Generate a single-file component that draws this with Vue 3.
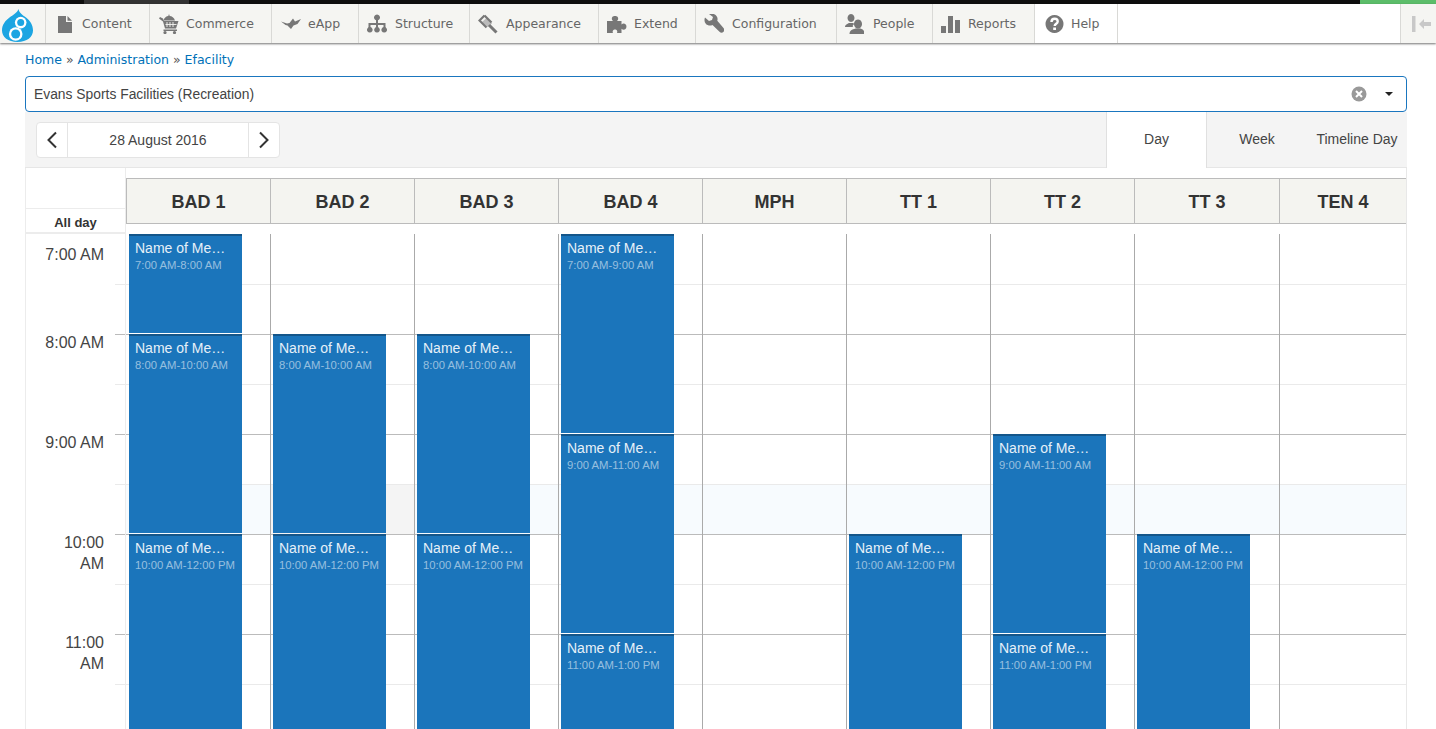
<script setup>
const nav = [
  { label: 'Content', width: 104, iconLeft: 12, textGap: 4, fill: ['M0 2h8v6h6v11H0z', 'M9.500 2L14 6.800H9.500z'] },
  { label: 'Commerce', width: 122, iconLeft: 9, textGap: 7, fill: ['M0 4.500l1-1.500 3 1.500 1 2.500h14.500l-2.500 7.500H6l-2-7-4-3z', 'M4.500 6.500c.8-3 3-4.300 4.800-4.500L10 0l.7 2c2.200.2 4.300 1.500 5.300 4.500z', 'M4.500 15.500h13.500V17H4.500z', 'M6 17a1.600 1.600 0 1 0 .01 0z', 'M15.500 17a1.600 1.600 0 1 0 .01 0z'], light: ['M8 8v5M11 8v5M14 8v5M6.500 10.500h11'] },
  { label: 'eApp', width: 87, iconLeft: 9, textGap: 7, fill: ['M0 7.500l6 2 2.500-.5L12 4.500l2 3 6-2.500-3.500 5-4 1.500-2.500 3.500-3.500-3.500-2-.5z'] },
  { label: 'Structure', width: 111, iconLeft: 8, textGap: 8, fill: ['M10 .5a3 3 0 1 0 .01 0z', 'M9 5h2v4h7.500v5h-2v-3H11v3H9v-3H3.500v3h-2V9H9z', 'M2.800 13a2.800 2.800 0 1 0 .01 0z', 'M10 13a2.800 2.800 0 1 0 .01 0z', 'M17.200 13a2.800 2.800 0 1 0 .01 0z'] },
  { label: 'Appearance', width: 129, iconLeft: 8, textGap: 8, light: ['M8.500 4L14 9.500 9.500 13 4 8z'], stroke: ['M6.500 1.500L1.500 6.500 8.500 13.500', 'M6.500 1.500L13.500 8.500'], thick: ['M11 11l7.500 7.500'] },
  { label: 'Extend', width: 97, iconLeft: 8, textGap: 7, fill: ['M0 7h6c-1.500-1-1.500-3-.5-4.200 1-1.200 4-1.200 5 0 1 1.200 1 3.200-.5 4.200h4.500v3.500c1.200-1.200 3-1.200 4-.2 1.300 1.200 1.300 3.500 0 4.700-1 1-2.800 1-4-.2V19h-4.500c1-2-.5-3.500-2-3.500s-3 1.500-2 3.500H0z'] },
  { label: 'Configuration', width: 141, iconLeft: 8, textGap: 8, fill: ['M1 3.500l4 3.500 3-1 1-3-4-3c3-1 6 0 7.500 2 1.200 1.700 1.300 3.200.8 4.700L19.500 14c1 1.300 1 2.600 0 3.800-1.100 1.300-2.800 1.200-4 0L8.500 11C6 12 3.500 11.500 2 10 .5 8.500 0 6 1 3.500z'] },
  { label: 'People', width: 96, iconLeft: 7, textGap: 9, fill: ['M7 0a3.500 4 0 1 0 .01 0z', 'M1 13c0-2.500 2.500-3 4-4h4l1.500 1c-2 1-2 2-1.500 3z', 'M14 5.500a4 4.500 0 1 0 .01 0z', 'M5.500 20c0-3.500 2.500-4.500 6-5.500h5c2.500 1 4 2 4 5.500z'] },
  { label: 'Reports', width: 102, iconLeft: 8, textGap: 7, fill: ['M0 12h5v7H0z', 'M7 2h5v17H7z', 'M14 6h5v13h-5z'] },
  { label: 'Help', width: 83, iconLeft: 10, textGap: 6, white: true, fill: ['M9.500 1a9 9 0 1 0 .01 0z'], holes: ['M6.500 8c0-2 1.300-3.200 3.200-3.200 1.800 0 3 1.100 3 2.600 0 2.400-3 2.300-3 4.600'], dots: ['M8.200 13.500h2.800v2.500H8.200z'] }
]

const resources = ['BAD 1', 'BAD 2', 'BAD 3', 'BAD 4', 'MPH', 'TT 1', 'TT 2', 'TT 3', 'TEN 4']
const hours = [
  { label: '7:00 AM', row: 1 },
  { label: '8:00 AM', row: 3 },
  { label: '9:00 AM', row: 5 },
  { label: '10:00 AM', row: 7 },
  { label: '11:00 AM', row: 9 }
]
const slots = Array.from({ length: 12 }, (_, i) => i + 1)

const events = [
  { col: 1, row: 1, span: 2, time: '7:00 AM-8:00 AM' },
  { col: 1, row: 3, span: 4, time: '8:00 AM-10:00 AM' },
  { col: 1, row: 7, span: 4, time: '10:00 AM-12:00 PM' },
  { col: 2, row: 3, span: 4, time: '8:00 AM-10:00 AM' },
  { col: 2, row: 7, span: 4, time: '10:00 AM-12:00 PM' },
  { col: 3, row: 3, span: 4, time: '8:00 AM-10:00 AM' },
  { col: 3, row: 7, span: 4, time: '10:00 AM-12:00 PM' },
  { col: 4, row: 1, span: 4, time: '7:00 AM-9:00 AM' },
  { col: 4, row: 5, span: 4, time: '9:00 AM-11:00 AM' },
  { col: 4, row: 9, span: 4, time: '11:00 AM-1:00 PM' },
  { col: 6, row: 7, span: 4, time: '10:00 AM-12:00 PM' },
  { col: 7, row: 5, span: 4, time: '9:00 AM-11:00 AM' },
  { col: 7, row: 9, span: 4, time: '11:00 AM-1:00 PM' },
  { col: 8, row: 7, span: 4, time: '10:00 AM-12:00 PM' }
]
</script>

<template>
  <div class="page">
    <div class="topbar">
      <span class="seg-a"></span>
      <span class="seg-b"></span>
      <span class="seg-c"></span>
      <span class="seg-d"></span>
    </div>

    <nav class="toolbar">
      <a class="logo">
        <svg width="31" height="33" viewBox="0 0 31 33">
          <path fill="#1ca5e2" d="M16.500 0c.8 4 4 6 7.500 8.500 4 3 7 7.500 7 13C31 28 25 33 15.500 33S0 28 0 21.500C0 15.500 3.500 11.500 7.500 8.500 11 6 15 4 16.500 0z" />
          <circle cx="18.700" cy="13.600" r="5.800" fill="#fff" />
          <circle cx="13.700" cy="25" r="6.800" fill="#fff" />
          <circle cx="18.700" cy="13.600" r="3.500" fill="#1ca5e2" />
          <circle cx="13.700" cy="25" r="4.500" fill="#1ca5e2" />
        </svg>
      </a>
      <a
        v-for="item in nav"
        :key="item.label"
        class="nav-item"
        :class="{ white: item.white }"
        :style="{ width: item.width + 'px', paddingLeft: item.iconLeft + 'px' }"
      >
        <svg class="nav-icon" width="20" height="20" viewBox="0 0 20 20" :style="{ marginRight: item.textGap + 'px' }">
          <path v-for="d in item.fill" :key="d" :d="d" fill="#777" />
          <path v-for="d in item.light" :key="d" :d="d" :fill="item.fill ? 'none' : '#bbb'" :stroke="item.fill ? '#f5f5f2' : 'none'" stroke-width="0.9" />
          <path v-for="d in item.stroke" :key="d" :d="d" fill="none" stroke="#777" stroke-width="2.200" />
          <path v-for="d in item.thick" :key="d" :d="d" fill="none" stroke="#777" stroke-width="3" />
          <path v-for="d in item.holes" :key="d" :d="d" fill="none" stroke="#fff" stroke-width="2.400" />
          <path v-for="d in item.dots" :key="d" :d="d" fill="#fff" />
        </svg>
        <span>{{ item.label }}</span>
      </a>
      <div class="tool-spacer"></div>
      <a class="tray">
        <svg width="20" height="16" viewBox="0 0 20 16">
          <path fill="#c8c8c8" d="M0 0h3.500v16H0z" />
          <path fill="#c8c8c8" d="M7 8l5-5v3h7v4h-7v3z" />
        </svg>
      </a>
    </nav>

    <main class="content">
      <div class="breadcrumb">
        <a>Home</a><span class="sep"> » </span><a>Administration</a><span class="sep"> » </span><a>Efacility</a>
      </div>

      <div class="select">
        <span class="select-text">Evans Sports Facilities (Recreation)</span>
        <svg class="clear" width="16" height="16" viewBox="0 0 16 16">
          <circle cx="8" cy="8" r="7.500" fill="#999" />
          <path d="M5 5l6 6M11 5l-6 6" stroke="#fff" stroke-width="2" />
        </svg>
        <span class="caret"></span>
      </div>

      <div class="cal-toolbar">
        <div class="date-group">
          <button class="arrow">
            <svg width="12" height="18" viewBox="0 0 12 18"><path d="M10 1.500L2.500 9l7.500 7.500" fill="none" stroke="#333" stroke-width="2" /></svg>
          </button>
          <div class="date">28 August 2016</div>
          <button class="arrow">
            <svg width="12" height="18" viewBox="0 0 12 18"><path d="M2 1.500L9.500 9 2 16.500" fill="none" stroke="#333" stroke-width="2" /></svg>
          </button>
        </div>
        <div class="tabs">
          <span class="tab active">Day</span>
          <span class="tab">Week</span>
          <span class="tab">Timeline Day</span>
        </div>
      </div>

      <div class="calendar">
        <div class="head">
          <div class="axis-head"><div class="all-day">All day</div></div>
          <div v-for="r in resources" :key="r" class="res">{{ r }}</div>
        </div>

        <div class="grid">
          <div v-for="s in slots" :key="'s' + s" class="slot" :class="{ hour: s % 2 === 1, none: s === 1 }" :style="{ gridRow: s }"></div>
          <div class="band"></div>
          <div class="band-gray"></div>
          <div v-for="(r, i) in resources.slice(1)" :key="'c' + r" class="col-line" :style="{ gridColumn: i + 3 }"></div>
          <div class="axis-line"></div>
          <div
            v-for="h in hours"
            :key="h.label"
            class="time"
            :class="{ first: h.row === 1 }"
            :style="{ gridRow: h.row + ' / span 2' }"
          >{{ h.label }}</div>
          <div
            v-for="e in events"
            :key="e.col + '-' + e.row"
            class="event"
            :style="{ gridColumn: e.col + 1, gridRow: e.row + ' / span ' + e.span }"
          >
            <div class="ev-title">Name of Me…</div>
            <div class="ev-time">{{ e.time }}</div>
          </div>
        </div>
      </div>
    </main>
  </div>
</template>

<style>
html, body { margin: 0; overflow: hidden; background: #fff; }
</style>

<style scoped>
.page {
  width: 1436px;
  height: 729px;
  overflow: hidden;
  font-family: "Liberation Sans", Arial, sans-serif;
  color: #333;
}
.topbar { display: flex; height: 4px; }
.seg-a { width: 84px; background: #0e0e0e; }
.seg-b { width: 105px; background: #333; }
.seg-c { flex: 1; background: #0e0e0e; }
.seg-d { width: 76px; background: #5cbd6a; }

.toolbar {
  position: relative;
  display: flex;
  height: 39px;
  background: #fff;
  box-shadow: 0 1px 2px rgba(0, 0, 0, .55);
  font-family: "DejaVu Sans", sans-serif;
  font-size: 12.500px;
  color: #666;
}
.logo {
  display: flex;
  align-items: center;
  box-sizing: border-box;
  width: 46px;
  padding-left: 2px;
  background: #f5f5f2;
  border-right: 1px solid #d9d9d6;
}
.logo svg { margin-top: 3px; }
.nav-item {
  display: flex;
  align-items: center;
  box-sizing: border-box;
  background: #f5f5f2;
  border-right: 1px solid #d9d9d6;
}
.nav-item.white { background: #fff; }
.nav-icon { flex: none; }
.tool-spacer { flex: 1; background: #fff; }
.tray {
  display: flex;
  align-items: center;
  box-sizing: border-box;
  width: 36px;
  padding-left: 11px;
  background: #f5f5f2;
  border-left: 1px solid #d9d9d6;
}

.content { padding: 0 29px 0 25px; }
.breadcrumb {
  height: 33px;
  box-sizing: border-box;
  padding-top: 9px;
  font-family: "DejaVu Sans", sans-serif;
  font-size: 12.500px;
  line-height: 16px;
  color: #0071b8;
}
.sep { color: #555; }

.select {
  display: flex;
  align-items: center;
  box-sizing: border-box;
  height: 36px;
  padding: 0 13px 0 8px;
  border: 1px solid #1a76bf;
  border-radius: 4px;
  font-size: 13.850px;
  color: #444;
}
.select-text { flex: 1; }
.clear { margin-right: 18px; }
.caret {
  width: 0;
  height: 0;
  border-left: 4px solid transparent;
  border-right: 4px solid transparent;
  border-top: 4px solid #222;
}

.cal-toolbar {
  display: flex;
  justify-content: space-between;
  box-sizing: border-box;
  height: 56px;
  background: #f4f4f4;
  border-bottom: 1px solid #e6e6e6;
  font-size: 14px;
  color: #444;
}
.date-group {
  display: flex;
  box-sizing: border-box;
  width: 244px;
  height: 36px;
  margin: 10px 0 0 11px;
  background: #fff;
  border: 1px solid #e4e4e4;
  border-radius: 4px;
}
.arrow {
  display: flex;
  align-items: center;
  justify-content: center;
  box-sizing: border-box;
  width: 30px;
  padding: 0;
  background: none;
  border: 0;
}
.date {
  flex: 1;
  text-align: center;
  line-height: 34px;
  border-left: 1px solid #e4e4e4;
  border-right: 1px solid #e4e4e4;
}
.tabs { display: flex; height: 55px; }
.tab {
  display: flex;
  align-items: center;
  justify-content: center;
  box-sizing: border-box;
  width: 100px;
  padding-bottom: 1px;
  white-space: nowrap;
}
.tab.active {
  width: 101px;
  height: 56px;
  padding-bottom: 2px;
  background: #fff;
  border-left: 1px solid #e0e0e0;
  border-right: 1px solid #e0e0e0;
}

.calendar {
  border-left: 1px solid #ececec;
  border-right: 1px solid #e8e8e8;
}
.head, .grid {
  display: grid;
  grid-template-columns: 100px repeat(7, 144px) 145px 127px;
}
.head { height: 66px; }
.axis-head {
  display: flex;
  align-items: flex-end;
  box-sizing: border-box;
  border-right: 1px solid #ececec;
}
.all-day {
  flex: 1;
  height: 26px;
  box-sizing: border-box;
  padding-top: 5px;
  text-align: center;
  font-size: 13px;
  font-weight: 700;
  line-height: 17px;
  border-top: 1px solid #ececec;
  border-bottom: 2px solid #ececec;
}
.res {
  box-sizing: border-box;
  height: 46px;
  margin-top: 10px;
  background: #f4f4f0;
  border-top: 1px solid #bbb;
  border-bottom: 1px solid #bbb;
  border-left: 1px solid #bbb;
  text-align: center;
  font-size: 18px;
  font-weight: 700;
  line-height: 46px;
}
.res:first-of-type { border-left: 0; }

.grid { grid-template-rows: repeat(12, 50px); }
.slot {
  grid-column: 1 / -1;
  margin-left: 89px;
  border-top: 1px solid #eaeaea;
  box-sizing: border-box;
}
.slot.hour { border-top-color: #bbb; }
.slot.none { border-top-color: transparent; }
.band {
  grid-column: 2 / -1;
  grid-row: 6;
  margin-top: 1px;
  background: #f7fbfe;
}
.band-gray {
  grid-column: 3;
  grid-row: 6;
  margin-top: 1px;
  background: #f4f4f4;
}
.col-line {
  grid-row: 1 / -1;
  border-left: 1px solid #aaa;
}
.axis-line {
  grid-column: 1;
  grid-row: 1 / -1;
  justify-self: end;
  width: 1px;
  background: #ececec;
}
.time {
  grid-column: 1;
  box-sizing: border-box;
  width: 78px;
  margin-top: -2px;
  padding-left: 16px;
  text-align: right;
  font-size: 16px;
  line-height: 21px;
  color: #444;
}
.time.first { margin-top: 10px; }
.event {
  box-sizing: border-box;
  width: 113px;
  margin: 0 0 1px 3px;
  padding-left: 6px;
  background: #1b75bb;
  border-top: 2px solid #14568a;
  overflow: hidden;
  white-space: nowrap;
}
.ev-title {
  margin-top: 2px;
  font-size: 14px;
  line-height: 20px;
  color: #e6f0f8;
}
.ev-time {
  font-size: 11.300px;
  line-height: 14px;
  color: rgba(255, 255, 255, .55);
}
</style>
